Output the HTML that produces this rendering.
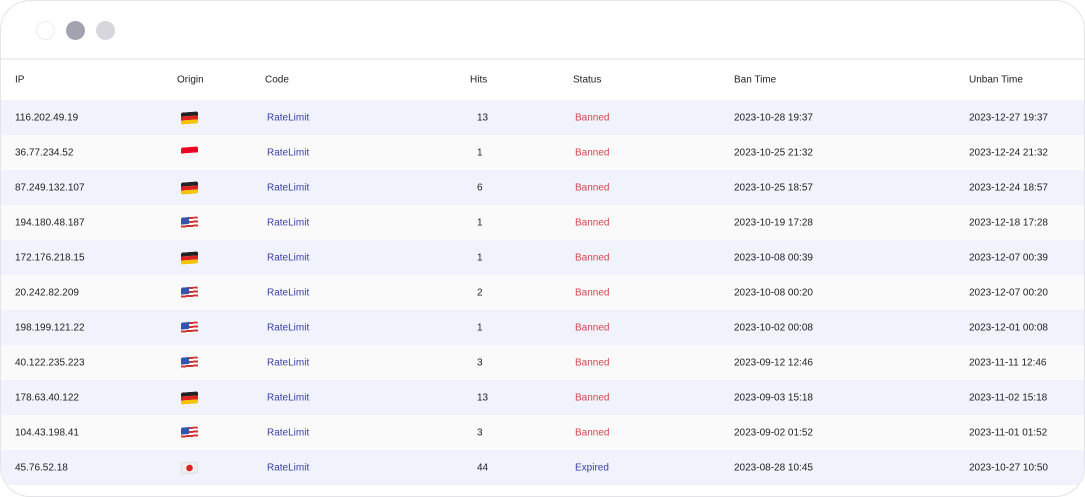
<!DOCTYPE html><html><head><style>
body{margin:0;width:1085px;height:497px;background:#fff;font-family:"Liberation Sans",sans-serif;font-size:10px;color:#222;overflow:hidden;position:relative}
.frame{position:absolute;left:0;top:0;width:1083px;height:495px;border:1px solid #e4e4e8;border-radius:30px;overflow:hidden;background:#fff}
.in{position:absolute;left:-1px;top:-1px;width:1085px;height:497px}
.dot{position:absolute;top:21px;width:19px;height:19px;border-radius:50%}
.bar{position:absolute;left:0;right:0;top:58px;height:2px;background:#f0f0f2}
.row{position:absolute;left:0;width:1085px;height:35px}
.row span{position:absolute;top:50%;transform:translateY(-50%);white-space:nowrap}
.f{width:17px;height:12px;border-radius:2px;overflow:hidden;display:flex;flex-direction:column;transform:translateY(-50%) skewY(-4deg)!important}
.f i{flex:1}
.code{color:#3a3fa8}.ban{color:#d9434b}.exp{color:#3a3fa8}
</style></head><body><div class="frame"><div class="in">
<div class="dot" style="left:36px;border:1px solid #ececee;width:17px;height:17px"></div>
<div class="dot" style="left:66px;background:#a3a3b0"></div>
<div class="dot" style="left:96px;background:#d6d6dc"></div>
<div class="bar"></div>
<div class="row" style="top:62px"><span style="left:15px">IP</span><span style="left:177px">Origin</span><span style="left:265px">Code</span><span style="left:470px">Hits</span><span style="left:573px">Status</span><span style="left:734px">Ban Time</span><span style="left:969px">Unban Time</span></div>
<div id="rows"></div>
</div></div>
<script>
const d=[["116.202.49.19","de",13,"Banned","2023-10-28 19:37","2023-12-27 19:37"],["36.77.234.52","id",1,"Banned","2023-10-25 21:32","2023-12-24 21:32"],["87.249.132.107","de",6,"Banned","2023-10-25 18:57","2023-12-24 18:57"],["194.180.48.187","us",1,"Banned","2023-10-19 17:28","2023-12-18 17:28"],["172.176.218.15","de",1,"Banned","2023-10-08 00:39","2023-12-07 00:39"],["20.242.82.209","us",2,"Banned","2023-10-08 00:20","2023-12-07 00:20"],["198.199.121.22","us",1,"Banned","2023-10-02 00:08","2023-12-01 00:08"],["40.122.235.223","us",3,"Banned","2023-09-12 12:46","2023-11-11 12:46"],["178.63.40.122","de",13,"Banned","2023-09-03 15:18","2023-11-02 15:18"],["104.43.198.41","us",3,"Banned","2023-09-02 01:52","2023-11-01 01:52"],["45.76.52.18","jp",44,"Expired","2023-08-28 10:45","2023-10-27 10:50"]];
const fl={de:'<i style="background:#222"></i><i style="background:#d22"></i><i style="background:#f5c400"></i>',id:'<i style="background:#e02"></i><i style="background:#f4f4f4"></i>',us:'<i style="background:repeating-linear-gradient(#c33 0 2px,#fff 2px 4px);position:relative"><b style="position:absolute;left:0;top:0;width:8px;height:7px;background:#35a"></b></i>',jp:'<i style="background:radial-gradient(circle,#d22 0 3px,#eee 3.5px);border:1px solid #ddd;border-radius:2px"></i>'};
let h="";d.forEach((r,i)=>{h+=`<div class="row" style="top:${100+i*35}px;background:${i%2?'#fafafa':'#f0f3fb'}"><span style="left:15px">${r[0]}</span><span class="f" style="left:181px">${fl[r[1]]}</span><span class="code" style="left:267px">RateLimit</span><span style="left:477px">${r[2]}</span><span class="${r[3]=='Banned'?'ban':'exp'}" style="left:575px">${r[3]}</span><span style="left:734px">${r[4]}</span><span style="left:969px">${r[5]}</span></div>`});
document.getElementById("rows").innerHTML=h;
</script></body></html>
